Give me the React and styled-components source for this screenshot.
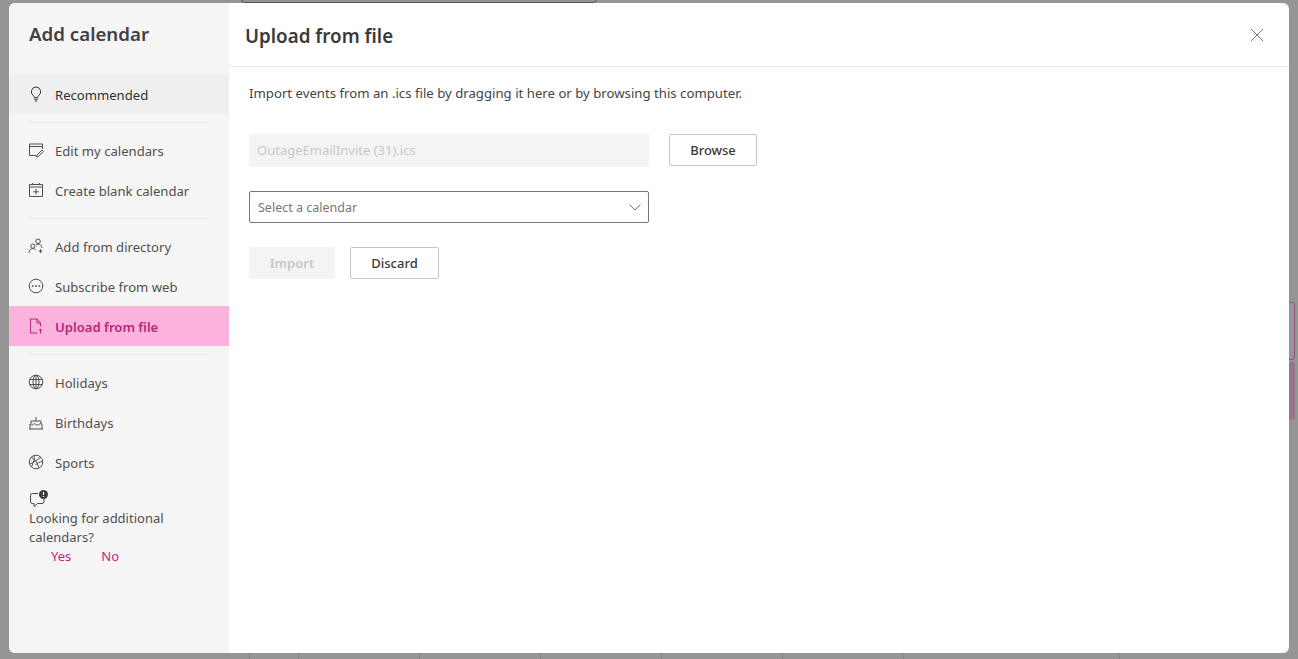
import React from 'react'
import styled, { createGlobalStyle } from 'styled-components'

const GlobalStyle = createGlobalStyle`
  html, body {
    margin: 0;
    height: 100%;
    background: #959595;
    font-family: "Noto Sans", "Open Sans", sans-serif;
  }
  * { box-sizing: border-box; }
`

const navGroups = [
  [{ label: 'Recommended', icon: 'bulb', tint: true }],
  [
    { label: 'Edit my calendars', icon: 'edit' },
    { label: 'Create blank calendar', icon: 'blank' },
  ],
  [
    { label: 'Add from directory', icon: 'people' },
    { label: 'Subscribe from web', icon: 'web' },
    { label: 'Upload from file', icon: 'upload', active: true },
  ],
  [
    { label: 'Holidays', icon: 'globe' },
    { label: 'Birthdays', icon: 'cake' },
    { label: 'Sports', icon: 'ball' },
  ],
]

const iconPaths = {
  bulb: <path d="M8 1a4.700 4.700 0 0 0-2.700 8.500c.7.600.9 1.200 1 2.200h3.400c.1-1 .3-1.600 1-2.200A4.700 4.700 0 0 0 8 1zM6.300 13.300h3.400M6.900 15h2.200" />,
  edit: <path d="M8 13.500H1.500V2h13v5M1.500 4.500h13M8.500 15l.5-2 5-5 1.400 1.400-5 5z" />,
  blank: <path d="M1.500 2.500h13v12h-13zM1.500 5h13M4.500 1v1.500M11.500 1v1.500M8 7v5.500M5.300 9.800h5.400" />,
  people: <path d="M10 1a2.300 2.300 0 1 0 0 4.600A2.300 2.300 0 0 0 10 1zM4.800 6a2.100 2.100 0 1 0 0 4.200 2.100 2.100 0 0 0 0-4.200zM1 15c0-2.600 1.600-4.400 3.800-4.400 1.300 0 2.400.6 3.100 1.700M8 7.300c1.200-1.300 3.400-1.300 4.700-.2.800.7 1.200 1.700 1.300 2.900M12.500 11.200V15M10.600 13.100h3.800" />,
  web: <><circle cx="8" cy="8" r="6.800" /><path d="M3.800 8h1.800M7.100 8h1.800M10.400 8h1.800" strokeWidth="1.300" /></>,
  upload: <path d="M12.500 8.500V5L9 1H2.500v14h7M9 1v4h3.500M12.500 15.500V11M10.800 12.700l1.700-1.700 1.700 1.700" />,
  globe: <><circle cx="8" cy="8" r="6.800" /><ellipse cx="8" cy="8" rx="3" ry="6.800" /><path d="M1.800 5.500h12.400M1.800 10.500h12.400M8 1.200v13.600" /></>,
  cake: <path d="M8 3v4M3 10V7h10v3M1 15h14M2 15v-5c1 1.200 2 1.200 3 .5 1-.9 2-.9 3 0s2 .9 3 0 2-.8 3-.5v5" />,
  ball: <><circle cx="8" cy="8" r="6.800" /><path d="M3.200 3.200c3 1.700 6.600 5.500 7.600 10.500M12.800 3.200C9.800 5 5 9 2 10M6 1.500C7 4 5.500 8 3.500 13M14.600 7.500c-3 .2-5.400 1.500-7.100 3.700" /></>,
}

const NavIcon = ({ name }) => (
  <IconSvg viewBox="0 0 16 16">{iconPaths[name]}</IconSvg>
)

const App = () => (
  <Page>
    <GlobalStyle />
    <BehindPill />
    <BehindOutlineEvent />
    <BehindFilledEvent />
    <BehindGrid>
      {[249, 298, 419, 540, 661, 782, 903, 1119].map((x) => (
        <BehindTick key={x} style={{ left: x }} />
      ))}
    </BehindGrid>

    <Modal>
      <Sidebar>
        <SidebarTitle>Add calendar</SidebarTitle>
        {navGroups.map((group, i) => (
          <NavGroup key={i} $first={i === 0}>
            {group.map((item) => (
              <NavItem key={item.label} $active={item.active} $tint={item.tint}>
                <NavIcon name={item.icon} />
                <NavLabel>{item.label}</NavLabel>
              </NavItem>
            ))}
          </NavGroup>
        ))}
        <Feedback>
          <FeedbackIcon viewBox="0 0 20 18">
            <path d="M9 3.500H3.500a2 2 0 0 0-2 2v6a2 2 0 0 0 2 2H5v3l3.500-3H13a2 2 0 0 0 2-2V9" fill="none" stroke="#444" strokeWidth="1" />
            <circle cx="14.500" cy="4.500" r="4.500" fill="#3b3a39" />
            <path d="M14.500 2v3M14.500 6v1" stroke="#fff" strokeWidth="1.200" />
          </FeedbackIcon>
          <FeedbackText>Looking for additional calendars?</FeedbackText>
          <FeedbackLinks>
            <FeedbackLink>Yes</FeedbackLink>
            <FeedbackLink>No</FeedbackLink>
          </FeedbackLinks>
        </Feedback>
      </Sidebar>

      <Main>
        <MainHeader>
          <MainTitle>Upload from file</MainTitle>
          <CloseIcon viewBox="0 0 14 14">
            <path d="M1 1l12 12M13 1L1 13" />
          </CloseIcon>
        </MainHeader>
        <MainBody>
          <Description>Import events from an .ics file by dragging it here or by browsing this computer.</Description>
          <FileRow>
            <FileField>OutageEmailInvite (31).ics</FileField>
            <OutlineButton $width={88}>Browse</OutlineButton>
          </FileRow>
          <SelectBox>
            <span>Select a calendar</span>
            <Chevron viewBox="0 0 12 7">
              <path d="M.5.500L6 6l5.500-5.500" />
            </Chevron>
          </SelectBox>
          <ActionRow>
            <DisabledButton>Import</DisabledButton>
            <OutlineButton $width={89}>Discard</OutlineButton>
          </ActionRow>
        </MainBody>
      </Main>
    </Modal>
  </Page>
)

const Page = styled.div`
  position: relative;
  width: 1298px;
  height: 659px;
  padding: 3px 9px 6px;
  overflow: hidden;
  background: #959595;
`

const BehindPill = styled.div`
  position: absolute;
  left: 241px;
  top: -20px;
  width: 356px;
  height: 23px;
  border: 1px solid #555;
  border-radius: 4px;
`

const BehindOutlineEvent = styled.div`
  position: absolute;
  left: 1270px;
  top: 302px;
  width: 25px;
  height: 58px;
  border: 1px solid #96507c;
  border-radius: 3px;
`

const BehindFilledEvent = styled.div`
  position: absolute;
  left: 1270px;
  top: 362px;
  width: 25px;
  height: 58px;
  background: #96758a;
  border-radius: 3px;
`

const BehindGrid = styled.div`
  position: absolute;
  left: 0;
  right: 0;
  bottom: 0;
  height: 6px;
`

const BehindTick = styled.div`
  position: absolute;
  top: 0;
  bottom: 0;
  width: 1px;
  background: #858585;
`

const Modal = styled.div`
  position: relative;
  display: flex;
  width: 1280px;
  height: 650px;
  background: #fff;
  border-radius: 6px;
  overflow: hidden;
`

const Sidebar = styled.aside`
  flex: 0 0 220px;
  background: #f5f5f5;
`

const SidebarTitle = styled.h2`
  margin: 0;
  height: 71px;
  padding: 16px 20px 0;
  font-size: 18.700px;
  line-height: 30px;
  font-weight: 600;
  color: #424140;
`

const NavGroup = styled.div`
  position: relative;
  margin-top: ${(p) => (p.$first ? '0' : '8px')};
  padding-top: ${(p) => (p.$first ? '0' : '8px')};

  &::before {
    content: ${(p) => (p.$first ? 'none' : '""')};
    position: absolute;
    top: 0;
    left: 20px;
    right: 20px;
    height: 1px;
    background: #ebebeb;
  }
`

const NavItem = styled.div`
  display: flex;
  align-items: center;
  gap: 11px;
  height: 40px;
  padding-left: 19px;
  font-size: 13.100px;
  font-weight: ${(p) => (p.$active ? 600 : 400)};
  color: ${(p) => (p.$active ? '#b8277b' : p.$tint ? '#323130' : '#505050')};
  background: ${(p) => (p.$active ? '#fbb2dd' : p.$tint ? '#efefef' : 'transparent')};
`

const NavLabel = styled.span`
  padding-top: 2px;
`

const IconSvg = styled.svg`
  flex: none;
  width: 16px;
  height: 16px;
  fill: none;
  stroke: currentColor;
  stroke-width: 1;
`

const Feedback = styled.div`
  padding: 8px 20px 0;
`

const FeedbackIcon = styled.svg`
  display: block;
  width: 20px;
  height: 18px;
`

const FeedbackText = styled.div`
  margin-top: 1px;
  font-size: 13px;
  line-height: 19px;
  color: #505050;
`

const FeedbackLinks = styled.div`
  display: flex;
  gap: 30px;
  padding-left: 22px;
`

const FeedbackLink = styled.span`
  font-size: 13px;
  line-height: 19px;
  color: #c8247f;
`

const Main = styled.main`
  flex: 1;
  display: flex;
  flex-direction: column;
`

const MainHeader = styled.header`
  display: flex;
  align-items: center;
  justify-content: space-between;
  height: 64px;
  padding: 2px 25px 0 16px;
  border-bottom: 1px solid #edebe9;
`

const MainTitle = styled.h1`
  margin: 0;
  font-size: 18.800px;
  font-weight: 600;
  color: #3b3a39;
`

const CloseIcon = styled.svg`
  width: 14px;
  height: 14px;
  margin-top: -2px;
  fill: none;
  stroke: #6a7a85;
  stroke-width: 1;
`

const MainBody = styled.div`
  padding: 16px 20px;
`

const Description = styled.p`
  margin: 0;
  height: 20px;
  font-size: 13.200px;
  line-height: 20px;
  color: #444;
`

const FileRow = styled.div`
  display: flex;
  gap: 20px;
  margin-top: 31px;
`

const FileField = styled.div`
  width: 400px;
  height: 33px;
  padding-left: 8px;
  font-size: 13px;
  line-height: 33px;
  color: #c8c8c8;
  background: #f4f4f4;
`

const OutlineButton = styled.button`
  width: ${(p) => p.$width}px;
  height: 32px;
  padding: 0 0 0;
  font: 500 13px/30px "Noto Sans", "Open Sans", sans-serif;
  color: #3b3a39;
  background: #fff;
  border: 1px solid #c8c6c4;
  border-radius: 2px;
`

const SelectBox = styled.div`
  display: flex;
  align-items: center;
  justify-content: space-between;
  width: 400px;
  height: 32px;
  margin-top: 24px;
  padding: 0 7px 0 8px;
  font-size: 12.500px;
  color: #777;
  border: 1px solid #767676;
  border-radius: 2px;
`

const Chevron = styled.svg`
  width: 12px;
  height: 7px;
  fill: none;
  stroke: #777;
  stroke-width: 1;
`

const ActionRow = styled.div`
  display: flex;
  gap: 15px;
  margin-top: 24px;
`

const DisabledButton = styled.div`
  width: 86px;
  height: 32px;
  font-size: 13px;
  font-weight: 600;
  line-height: 32px;
  text-align: center;
  color: #c8c8c8;
  background: #f4f4f4;
  border-radius: 2px;
`

export default App
